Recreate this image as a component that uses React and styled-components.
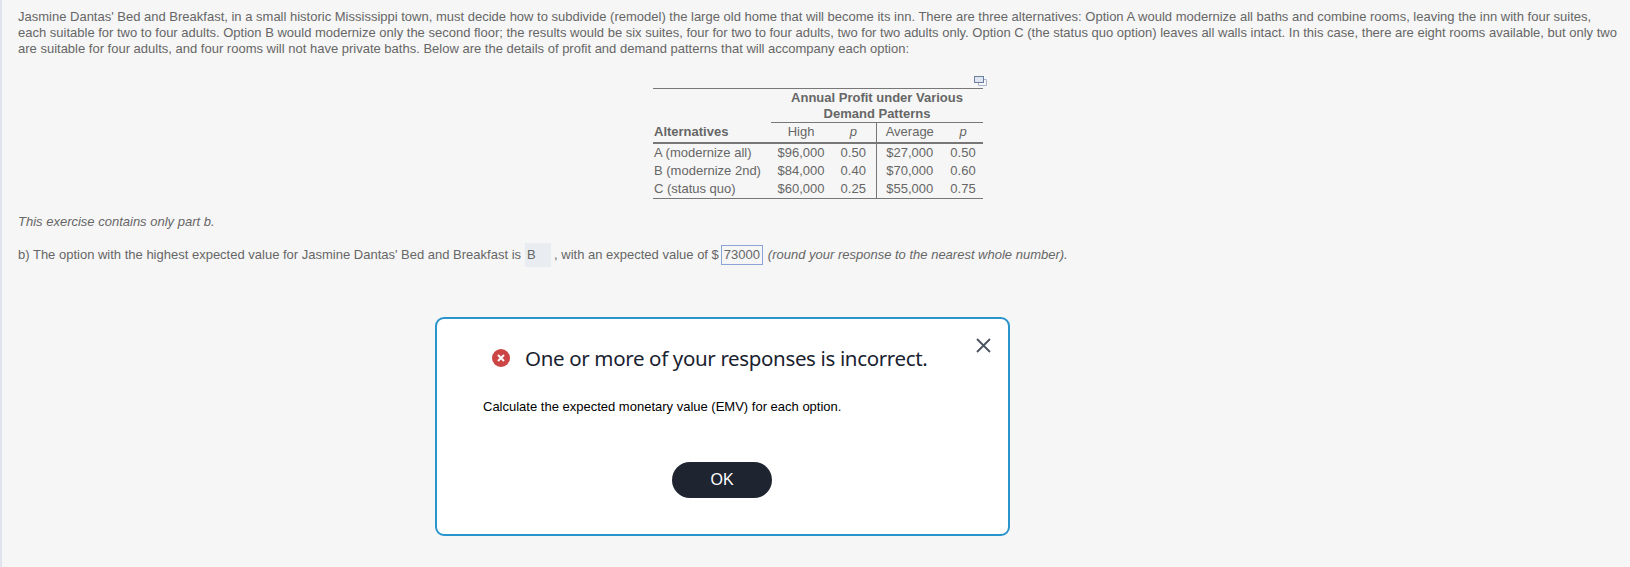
import React from 'react';
import styled, { createGlobalStyle } from 'styled-components';

const GlobalStyle = createGlobalStyle`
  html, body { margin: 0; padding: 0; background: #f6f6f6; }
  body { font-family: "Liberation Sans", Arial, sans-serif; }
`;

const rows = [
  ['A (modernize all)', '$96,000', '0.50', '$27,000', '0.50'],
  ['B (modernize 2nd)', '$84,000', '0.40', '$70,000', '0.60'],
  ['C (status quo)', '$60,000', '0.25', '$55,000', '0.75'],
];

export default function App() {
  return (
    <Page>
      <GlobalStyle />
      <Intro>
        Jasmine Dantas' Bed and Breakfast, in a small historic Mississippi town, must decide how to subdivide (remodel) the large old home that will become its inn. There are three alternatives: Option A would modernize all baths and combine rooms, leaving the inn with four suites,<br />
        each suitable for two to four adults. Option B would modernize only the second floor; the results would be six suites, four for two to four adults, two for two adults only. Option C (the status quo option) leaves all walls intact. In this case, there are eight rooms available, but only two<br />
        are suitable for four adults, and four rooms will not have private baths. Below are the details of profit and demand patterns that will accompany each option:
      </Intro>
      <TableArea>
        <CopyIcon width="13" height="10" viewBox="0 0 13 10">
          <rect x="0.5" y="0.5" width="9" height="6" fill="#dfe6f2" stroke="#6b7f9c" />
          <path d="M10 3.5h2.5v6h-8V7" fill="none" stroke="#a9b8cc" />
        </CopyIcon>
        <Table>
          <colgroup>
            <col width="118" />
            <col width="60" />
            <col width="45" />
            <col width="67" />
            <col width="40" />
          </colgroup>
          <thead>
            <tr>
              <HeadBlank />
              <GroupHead colSpan={4}>Annual Profit under Various<br />Demand Patterns</GroupHead>
            </tr>
            <tr>
              <LabelHead>Alternatives</LabelHead>
              <ColHead>High</ColHead>
              <ProbHead>p</ProbHead>
              <ColHead $divider>Average</ColHead>
              <ProbHead>p</ProbHead>
            </tr>
          </thead>
          <tbody>
            {rows.map(r => (
              <tr key={r[0]}>
                <Label>{r[0]}</Label>
                <Cell>{r[1]}</Cell>
                <Cell>{r[2]}</Cell>
                <Cell $divider>{r[3]}</Cell>
                <Cell>{r[4]}</Cell>
              </tr>
            ))}
          </tbody>
        </Table>
      </TableArea>
      <Note>This exercise contains only part b.</Note>
      <Question>
        b) The option with the highest expected value for Jasmine Dantas' Bed and Breakfast is
        <Answer>B</Answer>
        , with an expected value of $
        <Input>73000</Input>
        <Hint>(round your response to the nearest whole number).</Hint>
      </Question>
      <Modal>
        <CloseIcon width="15" height="15" viewBox="0 0 15 15">
          <path d="M1 1l13 13M14 1L1 14" stroke="#4a5260" strokeWidth="1.8" fill="none" />
        </CloseIcon>
        <Heading>
          <ErrorIcon width="18" height="18" viewBox="0 0 18 18">
            <circle cx="9" cy="9" r="9" fill="#cc4444" />
            <path d="M6 6l6 6M12 6l-6 6" stroke="#fff" strokeWidth="2" fill="none" />
          </ErrorIcon>
          One or more of your responses is incorrect.
        </Heading>
        <Message>Calculate the expected monetary value (EMV) for each option.</Message>
        <OkButton>OK</OkButton>
      </Modal>
    </Page>
  );
}

const Page = styled.div`
  box-sizing: border-box;
  width: 1630px;
  height: 567px;
  overflow: hidden;
  padding: 9px 0 0 16px;
  border-left: 2px solid #e1e4ee;
  color: #666;
  font-size: 13px;
  line-height: 16px;
`;

const Intro = styled.p`
  margin: 0;
  white-space: nowrap;
`;

const TableArea = styled.div`
  position: relative;
  width: 330px;
  margin: 31px 0 0 635px;
`;

const CopyIcon = styled.svg`
  position: absolute;
  top: -12px;
  right: -4px;
`;

const Table = styled.table`
  border-collapse: collapse;
  width: 330px;
  table-layout: fixed;
  border-top: 1px solid #777;
  border-bottom: 1px solid #777;
  font-size: 13px;
  line-height: 16px;
`;

const HeadBlank = styled.th`
  padding: 0;
`;

const GroupHead = styled.th`
  padding: 1px 0 0;
  text-align: center;
  font-weight: bold;
  border-bottom: 1px solid #777;
`;

const LabelHead = styled.th`
  padding: 1px 0 2px 1px;
  text-align: left;
  font-weight: bold;
  border-bottom: 2px solid #777;
`;

const ColHead = styled.th`
  padding: 1px 0 2px;
  font-weight: normal;
  text-align: center;
  border-bottom: 2px solid #777;
  border-left: ${p => (p.$divider ? '1px solid #777' : 'none')};
`;

const ProbHead = styled(ColHead)`
  font-style: italic;
`;

const Label = styled.td`
  padding: 0 0 0 1px;
  height: 18px;
  white-space: nowrap;
`;

const Cell = styled.td`
  padding: 0;
  text-align: center;
  border-left: ${p => (p.$divider ? '1px solid #777' : 'none')};
`;

const Note = styled.p`
  margin: 15px 0 0;
  font-style: italic;
`;

const Question = styled.div`
  display: flex;
  align-items: center;
  height: 24px;
  margin-top: 13px;
  white-space: pre;
`;

const Answer = styled.span`
  box-sizing: border-box;
  width: 26px;
  height: 24px;
  margin: 0 3px 0 4px;
  padding-left: 2px;
  line-height: 24px;
  background: #e9ecf1;
`;

const Input = styled.span`
  box-sizing: border-box;
  width: 42px;
  height: 20px;
  margin: 0 5px 0 2px;
  padding-left: 2px;
  line-height: 18px;
  border: 1px solid #8aa4d8;
`;

const Hint = styled.em`
  font-style: italic;
`;

const Modal = styled.div`
  position: relative;
  box-sizing: border-box;
  width: 575px;
  height: 219px;
  margin: 50px 0 0 417px;
  padding: 0 46px;
  background: #fff;
  border: 2px solid #2a94cc;
  border-radius: 9px;
  color: #000;
`;

const CloseIcon = styled.svg`
  position: absolute;
  top: 19px;
  right: 17px;
`;

const Heading = styled.h2`
  display: flex;
  align-items: center;
  gap: 15px;
  margin: 24px 0 0 9px;
  font-family: "Noto Sans", "Open Sans", sans-serif;
  font-size: 20.5px;
  letter-spacing: -0.35px;
  line-height: 30px;
  font-weight: normal;
  color: #1a2230;
  white-space: nowrap;
`;

const ErrorIcon = styled.svg`
  flex: none;
`;

const Message = styled.p`
  margin: 26px 0 0;
  font-size: 13px;
  line-height: 16px;
`;

const OkButton = styled.button`
  display: block;
  width: 100px;
  height: 36px;
  margin: 47px 0 0 189px;
  padding: 0;
  border: none;
  border-radius: 18px;
  background: #1e2430;
  color: #fff;
  font-family: "Liberation Sans", Arial, sans-serif;
  font-size: 16px;
`;
